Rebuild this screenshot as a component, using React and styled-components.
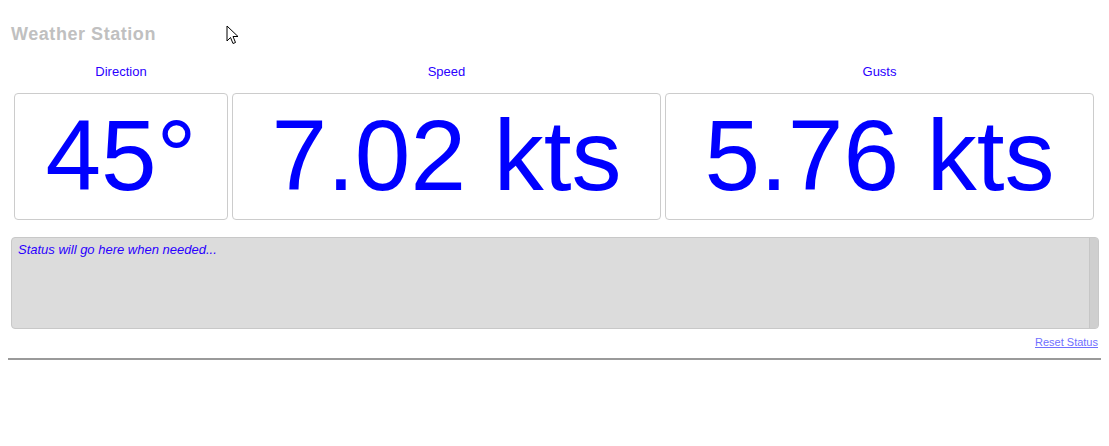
import React from "react";
import styled, { createGlobalStyle } from "styled-components";

const GlobalStyle = createGlobalStyle`
  body {
    margin: 0;
    background: #ffffff;
    font-family: "Liberation Sans", Arial, sans-serif;
  }
`;

const readings = [
  { label: "Direction", value: "45°" },
  { label: "Speed", value: "7.02 kts" },
  { label: "Gusts", value: "5.76 kts" },
];

const App = () => {
  return (
    <Page>
      <GlobalStyle />
      <Title>Weather Station</Title>
      <Readings>
        {readings.map((r) => (
          <Label key={r.label}>{r.label}</Label>
        ))}
        {readings.map((r) => (
          <ValueBox key={r.label + "-v"}>{r.value}</ValueBox>
        ))}
      </Readings>
      <StatusBox>
        <StatusText>Status will go here when needed...</StatusText>
        <ScrollStrip />
      </StatusBox>
      <ResetRow>
        <ResetLink href="#">Reset Status</ResetLink>
      </ResetRow>
      <Rule />
      <Cursor width="14" height="20" viewBox="0 0 14 20">
        <path
          d="M1 1 L1 16 L4.5 12.5 L7 18.5 L9.5 17.5 L7 11.5 L12 11.5 Z"
          fill="#fff"
          stroke="#000"
          strokeWidth="1"
          strokeLinejoin="miter"
        />
      </Cursor>
    </Page>
  );
};

export default App;

const Page = styled.div`
  position: relative;
  padding: 24px 8px 0 8px;
  width: 1093px;
`;

const Title = styled.h1`
  margin: 0 0 0 3px;
  font-size: 18px;
  line-height: 20px;
  font-weight: bold;
  letter-spacing: 0.55px;
  color: #c0c0c0;
`;

const Readings = styled.div`
  display: grid;
  grid-template-columns: 214px 429px 429px;
  column-gap: 4px;
  margin: 18px 0 0 6px;
`;

const Label = styled.div`
  text-align: center;
  font-size: 13px;
  line-height: 16px;
  color: #2a00ff;
  height: 31px;
  padding-top: 2px;
  box-sizing: border-box;
`;

const ValueBox = styled.div`
  height: 127px;
  box-sizing: border-box;
  border: 1px solid #cccccc;
  border-radius: 4px;
  display: flex;
  align-items: center;
  justify-content: center;
  font-size: 100px;
  line-height: 1;
  color: #0000ff;
  padding-bottom: 4px;
`;

const StatusBox = styled.div`
  position: relative;
  margin: 17px 0 0 3px;
  width: 1088px;
  height: 92px;
  box-sizing: border-box;
  background: #dcdcdc;
  border: 1px solid #c8c8c8;
  border-radius: 4px;
  overflow: hidden;
`;

const StatusText = styled.div`
  padding: 4px 0 0 6px;
  font-size: 13px;
  font-style: italic;
  color: #2a00ff;
`;

const ScrollStrip = styled.div`
  position: absolute;
  top: 0;
  right: 0;
  bottom: 0;
  width: 8px;
  background: #cfcfcf;
  border-left: 1px solid #c6c6c6;
`;

const ResetRow = styled.div`
  display: flex;
  justify-content: flex-end;
  width: 1090px;
  margin-top: 6px;
`;

const ResetLink = styled.a`
  font-size: 11px;
  line-height: 14px;
  color: #6f6fff;
  text-decoration: underline;
`;

const Rule = styled.hr`
  margin: 9px 0 0 0;
  width: 1093px;
  border: none;
  border-top: 2px solid #9a9a9a;
  height: 0;
`;

const Cursor = styled.svg`
  position: absolute;
  left: 226px;
  top: 25px;
`;
